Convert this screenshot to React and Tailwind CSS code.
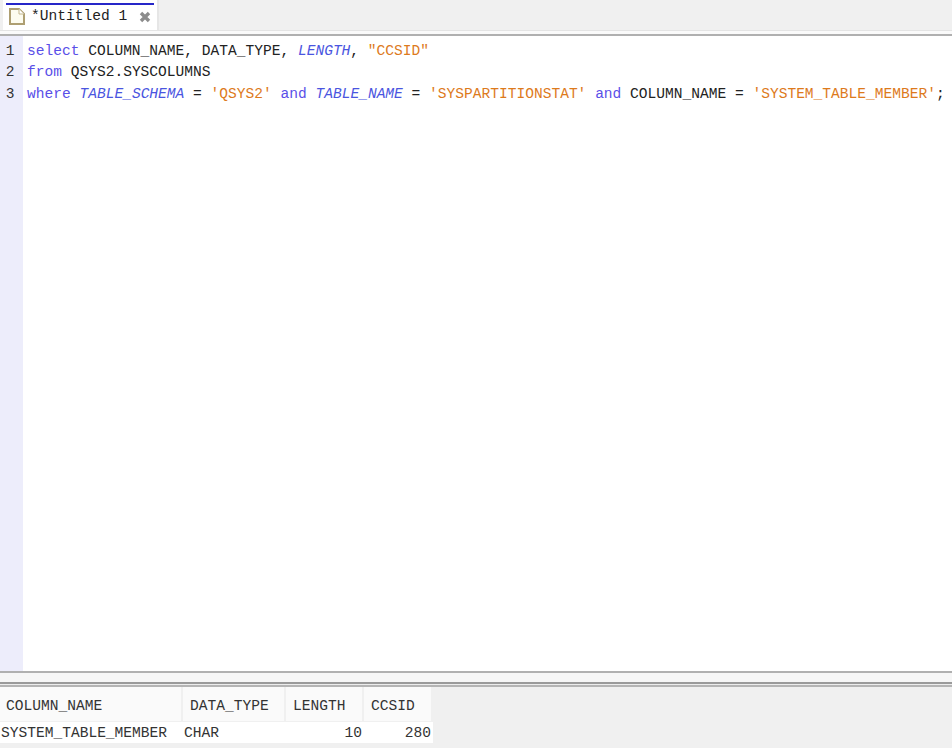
import React from "react";

const mono = "font-['Liberation_Mono',monospace]";

const Kw = ({ children }) => <span className="text-[#5a4fe8]">{children}</span>;
const Fn = ({ children }) => <span className="text-[#4a55e0] italic">{children}</span>;
const Str = ({ children }) => <span className="text-[#dd7a1c]">{children}</span>;

const App = () => {
  return (
    <div className={`w-[952px] h-[748px] overflow-hidden flex flex-col bg-[#f0f0f0] ${mono} text-[14.57px] text-[#222]`}>
      {/* tab bar */}
      <div className="h-[30px] flex items-start pl-[3px] shrink-0">
        <div className="w-[156px] h-[30px] bg-white border-r-2 border-r-[#e6e6e6] flex flex-col">
          <div className="h-[2px] mt-[3px] mx-[3px] bg-[#2626c8] shrink-0" />
          <div className="flex items-center pl-[6px] h-[19px] mt-[2px]">
            <svg width="16" height="17" viewBox="0 0 16 17" className="shrink-0">
              <path d="M1 1h9l5 5v10H1z" fill="#fdfcf0" stroke="#ae9f72" strokeWidth="2" />
              <path d="M10 1v5h5" fill="#ffffff" stroke="#c4b88f" strokeWidth="1" />
            </svg>
            <span className="ml-[6px] text-[#222] whitespace-pre">*Untitled 1</span>
            <svg width="12" height="12" viewBox="0 0 12 12" className="ml-[12px] shrink-0">
              <path d="M2 2l8 8M10 2l-8 8" stroke="#8c8c8c" strokeWidth="3.4" />
            </svg>
          </div>
        </div>
      </div>
      <div className="h-[4px] shrink-0 bg-[#fafafa] border-t border-t-[#e4e4e4]" />
      <div className="h-[2px] shrink-0 bg-[#b0b0b0]" />

      {/* editor */}
      <div className="h-[635px] shrink-0 flex bg-white">
        <div className="w-[23px] bg-[#ededfb] pt-[5px] text-center text-[#333] leading-[21.3px]">
          <div className="pr-[3px]">1</div>
          <div className="pr-[3px]">2</div>
          <div className="pr-[3px]">3</div>
        </div>
        <div className="flex-1 pl-[4px] pt-[5px] leading-[21.3px] whitespace-pre">
          <div>
            <Kw>select</Kw> COLUMN_NAME, DATA_TYPE, <Fn>LENGTH</Fn>, <Str>"CCSID"</Str>
          </div>
          <div>
            <Kw>from</Kw> QSYS2.SYSCOLUMNS
          </div>
          <div>
            <Kw>where</Kw> <Fn>TABLE_SCHEMA</Fn> = <Str>'QSYS2'</Str> <Kw>and</Kw> <Fn>TABLE_NAME</Fn> = <Str>'SYSPARTITIONSTAT'</Str> <Kw>and</Kw> COLUMN_NAME = <Str>'SYSTEM_TABLE_MEMBER'</Str>;
          </div>
        </div>
      </div>

      {/* splitter */}
      <div className="h-[2px] shrink-0 bg-[#b0b0b0]" />
      <div className="h-[9px] shrink-0 bg-[#f6f6f6]" />
      <div className="h-[2px] shrink-0 bg-[#9a9a9a]" />
      <div className="h-[1px] shrink-0 bg-[#ececec]" />
      <div className="h-[2px] shrink-0 bg-[#b4b4b4]" />

      {/* results */}
      <div className="flex flex-col text-[#333]">
        <div className="flex h-[34px] items-center gap-[2px]">
          <div className="w-[181px] h-full pl-[6px] pt-[5px] flex items-center bg-[#fafafa]">COLUMN_NAME</div>
          <div className="w-[101px] h-full pl-[7px] pt-[5px] flex items-center bg-[#fafafa]">DATA_TYPE</div>
          <div className="w-[76px] h-full pl-[7px] pt-[5px] flex items-center bg-[#fafafa]">LENGTH</div>
          <div className="w-[67px] h-full pl-[7px] pt-[5px] flex items-center bg-[#fafafa]">CCSID</div>
        </div>
        <div className="flex h-[21px] items-center bg-white w-[433px] mt-[1px] pt-[3px]">
          <div className="w-[184px] pl-[1px]">SYSTEM_TABLE_MEMBER</div>
          <div className="w-[100px]">CHAR</div>
          <div className="w-[78px] text-right">10</div>
          <div className="w-[69px] text-right">280</div>
        </div>
      </div>
    </div>
  );
};

export default App;
